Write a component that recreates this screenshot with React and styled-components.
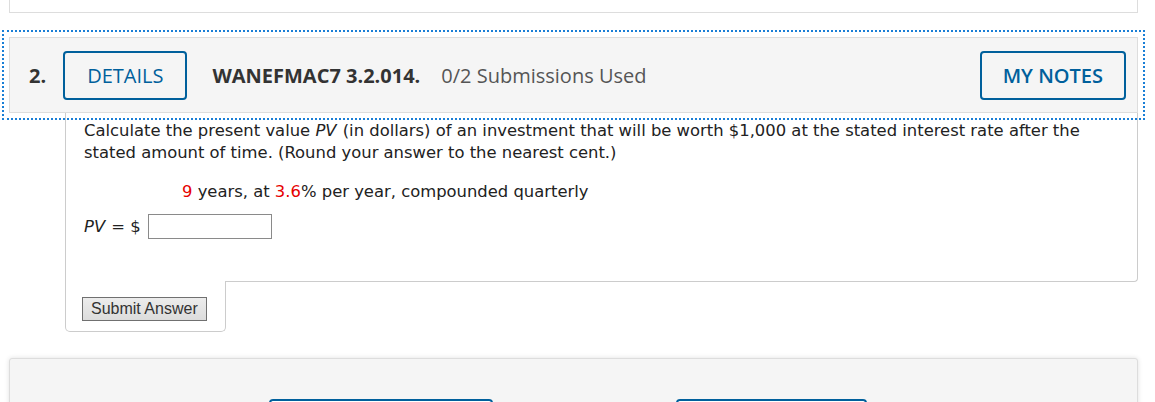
import React from "react";
import styled, { createGlobalStyle } from "styled-components";

const GlobalStyle = createGlobalStyle`
  body {
    margin: 0;
    background: #ffffff;
    overflow: hidden;
  }
`;

const Page = styled.div`
  padding: 0 17px 0 9px;
  height: 402px;
  overflow: hidden;
`;

const PrevCard = styled.div`
  height: 13px;
  box-sizing: border-box;
  border: 1px solid #dddddd;
  border-top: none;
  background: #ffffff;
`;

const Question = styled.section`
  margin-top: 24px;
`;

const Header = styled.div`
  display: flex;
  align-items: center;
  height: 76px;
  box-sizing: border-box;
  padding: 0 11px 0 19px;
  background: #f5f5f5;
  border: 1px solid #dddddd;
  outline: 2px dotted #1a7fd6;
  outline-offset: 5px;
  font-family: "Open Sans", "Liberation Sans", sans-serif;
  font-size: 20px;
  color: #333333;
`;

const Number = styled.span`
  font-weight: 700;
  margin-right: 17px;
`;

const OutlineButton = styled.button`
  height: 49px;
  box-sizing: border-box;
  padding: 0 ${(p) => p.$pad || 22}px;
  margin-left: ${(p) => (p.$push ? "auto" : "0")};
  border: 2px solid #00609c;
  border-radius: 4px;
  background: transparent;
  color: #00609c;
  font-family: "Open Sans", "Liberation Sans", sans-serif;
  font-size: 20px;
  font-weight: ${(p) => p.$weight || 400};
`;

const Title = styled.span`
  font-weight: 700;
  margin-left: 25px;
`;

const Submissions = styled.span`
  margin-left: 21px;
  color: #555555;
`;

const Body = styled.div`
  margin-left: 56px;
  height: 169px;
  box-sizing: border-box;
  padding: 7px 18px 0 18px;
  border: 1px solid #cccccc;
  border-top: none;
  border-bottom-right-radius: 4px;
  font-family: Verdana, "DejaVu Sans", sans-serif;
  font-size: 16.4px;
  line-height: 22px;
  color: #222222;
`;

const Para = styled.p`
  margin: 0;
`;

const Var = styled.i`
  padding-right: 1px;
`;

const Problem = styled.p`
  margin: 17px 0 0 98px;
`;

const Red = styled.span`
  color: #e60000;
`;

const AnswerRow = styled.div`
  display: flex;
  align-items: center;
  gap: 7px;
  margin-top: 11px;
`;

const Field = styled.input`
  width: 124px;
  height: 25px;
  box-sizing: border-box;
  border: 1px solid #8a8a8a;
  margin: 0;
`;

const SubmitTab = styled.div`
  position: relative;
  margin: -1px 0 0 56px;
  width: 161px;
  box-sizing: border-box;
  padding: 16px 16px 10px 16px;
  border: 1px solid #cccccc;
  border-top: none;
  border-radius: 0 0 5px 5px;
  background: #ffffff;
`;

const SubmitButton = styled.button`
  height: 24px;
  padding: 0 8px;
  border: 1px solid #707070;
  background: linear-gradient(#ececec, #dcdcdc);
  color: #333333;
  font-family: Arial, "Liberation Sans", sans-serif;
  font-size: 16px;
  white-space: nowrap;
`;

const NextCard = styled.div`
  margin-top: 26px;
  height: 100px;
  box-sizing: border-box;
  padding: 40px 0 0 259px;
  display: flex;
  align-items: flex-start;
  gap: 183px;
  background: #f5f5f5;
  border: 1px solid #dddddd;
  border-radius: 3px;
  box-shadow: 0 0 5px rgba(0, 0, 0, 0.12);
`;

const NavButton = styled.div`
  width: ${(p) => p.$w}px;
  height: 45px;
  flex: none;
  box-sizing: border-box;
  border: 2px solid #00609c;
  border-radius: 4px;
  background: #ffffff;
`;

export default function App() {
  return (
    <>
      <GlobalStyle />
      <Page>
        <PrevCard />
        <Question>
          <Header>
            <Number>2.</Number>
            <OutlineButton>DETAILS</OutlineButton>
            <Title>WANEFMAC7 3.2.014.</Title>
            <Submissions>0/2 Submissions Used</Submissions>
            <OutlineButton $push $pad={21} $weight={600}>
              MY NOTES
            </OutlineButton>
          </Header>
          <Body>
            <Para>
              Calculate the present value <Var>PV</Var> (in dollars) of an investment
              that will be worth $1,000 at the stated interest rate after the
              stated amount of time. (Round your answer to the nearest cent.)
            </Para>
            <Problem>
              <Red>9</Red> years, at <Red>3.6</Red>% per year, compounded quarterly
            </Problem>
            <AnswerRow>
              <span>
                <Var>PV</Var> = $
              </span>
              <Field type="text" />
            </AnswerRow>
          </Body>
          <SubmitTab>
            <SubmitButton>Submit Answer</SubmitButton>
          </SubmitTab>
        </Question>
        <NextCard>
          <NavButton $w={224} />
          <NavButton $w={191} />
        </NextCard>
      </Page>
    </>
  );
}
